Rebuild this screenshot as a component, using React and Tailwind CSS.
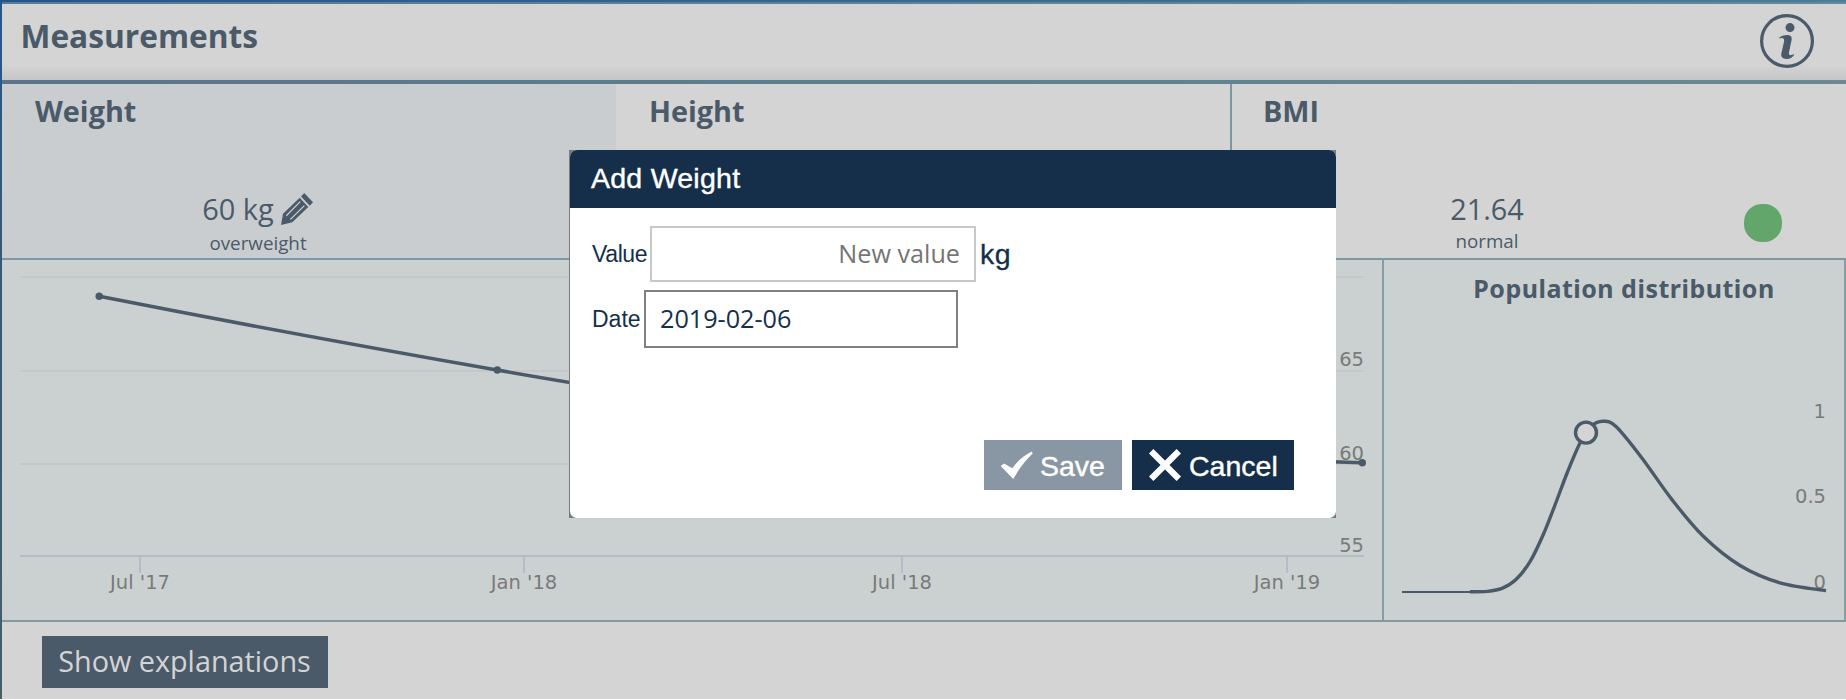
const OS = "font-['Open_Sans',sans-serif]";
const GRID_Y = [277, 371, 464];
const MONTHS = [
  { x: 140, label: "Jul '17" },
  { x: 524, label: "Jan '18" },
  { x: 902, label: "Jul '18" },
  { x: 1287, label: "Jan '19" },
];
const WEIGHTS = [
  { y: 366, label: "65" },
  { y: 460, label: "60" },
  { y: 552, label: "55" },
];
const DENSITY = [
  { y: 418, label: "1" },
  { y: 503, label: "0.5" },
  { y: 588.5, label: "0" },
];
const CURVE = [
  [1470, 591.8], [1487, 591.4], [1502, 588.4], [1516, 579.6], [1530, 561.7], [1543.3, 534.5],
  [1555, 505], [1567.5, 472], [1580, 443], [1590.5, 427], [1602.7, 421.3], [1616, 426.5],
  [1641.7, 457.7], [1672, 499.6], [1703.3, 536.3], [1740, 565.5], [1780, 582.8], [1826, 590.7],
];

/* Catmull-Rom spline through the points, written as cubic segments */
function spline(p) {
  let d = `M${p[0][0]} ${p[0][1]}`;
  for (let i = 0; i < p.length - 1; i++) {
    const a = p[i - 1] || p[i];
    const b = p[i];
    const c = p[i + 1];
    const e = p[i + 2] || c;
    d += `C${b[0] + (c[0] - a[0]) / 6} ${b[1] + (c[1] - a[1]) / 6} ${c[0] - (e[0] - b[0]) / 6} ${c[1] - (e[1] - b[1]) / 6} ${c[0]} ${c[1]}`;
  }
  return d;
}

function PencilIcon() {
  return (
    <svg className="h-8 w-8 shrink-0" viewBox="0 0 32 32" fill="#4a5a69">
      <path d="M23.2 0 32 9.3 28.8 12.7 20 3.4Z" />
      <path d="M18.7 4.8 27.3 14 11.3 29.3 0 32 2 20.8Z" />
      <path d="M5.3 22.8 19.2 8.6M9.4 26.4 23.4 12.6" stroke="#cacdd0" strokeWidth="1.3" fill="none" />
    </svg>
  );
}

function InfoIcon() {
  return (
    <svg className="h-[54px] w-[54px]" viewBox="0 0 54 54" fill="#4a5a69">
      <circle cx="27" cy="27" r="25.4" fill="none" stroke="#4a5a69" strokeWidth="3.2" />
      <circle cx="30" cy="13.6" r="4.5" />
      <path d="M18.6 24.3C21 21.6 25 20.8 28.2 21c2.8.3 4 2 3.400 5l-2.600 12.300c-.4 2 .2 3 2 2.800 1.200-.1 2.200-.6 3.200-1.200-.6 3-3.800 4.900-7.600 5-4 .1-5.900-1.900-5.200-5.600l2.600-11.600c.4-1.900.1-3.300-1.800-3.600-1.300-.2-2.400.3-3.600.2Z" />
    </svg>
  );
}

function WeightChart() {
  return (
    <svg className="block h-[360px] w-[1380px] bg-[#cbd1d0]" viewBox="2 260 1380 360">
      {GRID_Y.map((y) => (
        <path key={y} d={`M20 ${y}H1364`} stroke="#c5c7c8" strokeWidth="2" />
      ))}
      <path d="M20 556H1364" stroke="#b5bbc9" strokeWidth="2" />
      {MONTHS.map((m) => (
        <g key={m.label}>
          <path d={`M${m.x} 557V573`} stroke="#b5bbc9" strokeWidth="2" />
          <text x={m.x} y="589" textAnchor="middle" className="font-['DejaVu_Sans',sans-serif] text-[19.5px]" fill="#7a7a7a">
            {m.label}
          </text>
        </g>
      ))}
      {WEIGHTS.map((w) => (
        <text key={w.label} x="1364" y={w.y} textAnchor="end" className="font-['DejaVu_Sans',sans-serif] text-[19.5px]" fill="#7a7a7a">
          {w.label}
        </text>
      ))}
      <path d="M99.2 296.3C230 322 360 346 497 370 760 416 1040 455 1362 462.7" fill="none" stroke="#4a5a69" strokeWidth="3.5" />
      <circle cx="99.2" cy="296.2" r="3.7" fill="#4a5a69" />
      <circle cx="497.3" cy="370" r="3.7" fill="#4a5a69" />
      <circle cx="1362.3" cy="462.8" r="3.7" fill="#4a5a69" />
    </svg>
  );
}

function PopulationChart() {
  return (
    <svg className="block h-[360px] w-[460px] bg-[#cbd1d0]" viewBox="1384 260 460 360">
      <text x="1624" y="298" textAnchor="middle" className="font-['Noto_Sans',sans-serif] text-[25px] font-bold tracking-[0.5px]" fill="#4a5a69">
        Population distribution
      </text>
      {DENSITY.map((d) => (
        <text key={d.label} x="1826" y={d.y} textAnchor="end" className="font-['DejaVu_Sans',sans-serif] text-[19.5px]" fill="#7a7a7a">
          {d.label}
        </text>
      ))}
      <path d="M1402 592H1480" stroke="#4a5a69" strokeWidth="2" />
      <path d={spline(CURVE)} fill="none" stroke="#4a5a69" strokeWidth="3.4" />
      <circle cx="1586" cy="432.6" r="10.5" fill="#d4d4d4" stroke="#4a5a69" strokeWidth="3.4" />
    </svg>
  );
}

function AddWeightDialog() {
  return (
    <div className="absolute left-[569px] top-[150px] w-[767px] bg-[#777b7c] pl-px">
      <div className="flex h-[368px] flex-col overflow-hidden rounded-[7px] bg-white font-['Liberation_Sans',Arial,sans-serif] text-[#152f4b]">
        <h2 className="h-[58px] bg-[#152f4b] pl-[21px] text-[28.5px] leading-[56px] tracking-[0.25px] text-white [-webkit-text-stroke:0.4px]">
          Add Weight
        </h2>
        <div className="mt-[18px] flex h-[56px] items-center pl-[22px]">
          <label className="w-[58px] text-[23px] leading-[56px] tracking-[-0.4px]">Value</label>
          <input
            placeholder="New value"
            className={`h-[56px] w-[326px] border-2 border-[#c8c8c8] bg-white pb-[3px] pr-[14px] text-right text-[25.2px] outline-none placeholder:text-[#757575] placeholder:opacity-100 ${OS}`}
          />
          <span className="pl-[4px] text-[28.5px] leading-[56px] tracking-[0.4px] [-webkit-text-stroke:0.3px]">kg</span>
        </div>
        <div className="mt-2 flex h-[58px] items-center pl-[22px]">
          <label className="w-[52px] text-[23px] leading-[56px]">Date</label>
          <input
            defaultValue="2019-02-06"
            className={`h-[58px] w-[314px] border-2 border-[#808080] bg-white pb-[2px] pl-[14px] text-[25.2px] outline-none ${OS}`}
          />
        </div>
        <div className="mt-[92px] flex gap-[10px] pl-[414px] text-[28.5px] leading-[52px] text-white [-webkit-text-stroke:0.4px]">
          <button className="flex h-[50px] w-[138px] items-center bg-[#8997a5] pl-4">
            <svg className="mr-2 h-8 w-8 overflow-visible" viewBox="0 0 32 32" fill="#fff">
              <path d="M.7 16.9 4 14.5 12.300 19.200C17.500 12 24 6.300 31.700 2.400L32.700 4.500C25.500 11 18.500 20.500 13.300 30Z" />
            </svg>
            <span className="pt-[2px]">Save</span>
          </button>
          <button className="flex h-[50px] w-[162px] items-center bg-[#152f4b] pl-[17px]">
            <svg className="mr-2 h-8 w-8" viewBox="0 0 32 32" stroke="#fff" strokeWidth="6.2">
              <path d="M2.2 2.2 29.8 29.8M29.8 2.2 2.2 29.8" />
            </svg>
            <span className="pt-[2px]">Cancel</span>
          </button>
        </div>
      </div>
    </div>
  );
}

export default function App() {
  return (
    <div className={`relative flex h-[699px] w-[1846px] flex-col overflow-hidden bg-[#d4d4d4] text-[#4a5a69] ${OS}`}>
      <div className="h-[2px] shrink-0 bg-linear-to-r from-[#22568a] to-[#457f9a]" />
      <div className="flex grow">
        <div className="w-[2px] shrink-0 bg-linear-to-b from-[#26578a] via-[#3a5a70] to-[#46606a]" />
        <div className="flex w-[1844px] flex-col">
          <div className="h-[2px] bg-linear-to-r from-[#5c7893] to-[#6b8794]" />
          <header className="flex h-[76px] items-start justify-between bg-linear-to-b from-[#d4d4d4] from-80% to-[#c6c6c6] pl-[18.5px] pr-8">
            <h1 className="mt-3 text-[31.7px] font-bold leading-10">Measurements</h1>
            <div className="mt-[10px]">
              <InfoIcon />
            </div>
          </header>
          <div className="h-1 bg-linear-to-r from-[#5c7389] via-[#5c8090] to-[#6d8890]" />
          <section className="flex h-[174px]">
            <div className="flex w-[614px] flex-col bg-[#cacdd0]">
              <h2 className="mt-[7px] pl-[33px] text-[28.8px] font-bold leading-10">Weight</h2>
              <div className="mt-[58px] flex w-[512px] flex-col items-center">
                <div className="flex items-center gap-[7px] text-[29px] leading-10">
                  <span className="-ml-px">60 kg</span> <PencilIcon />
                </div>
                <div className="mt-[2px] text-[18.8px] leading-6">overweight</div>
              </div>
            </div>
            <div className="w-[614px] pl-[33px]">
              <h2 className="mt-[7px] text-[28.8px] font-bold leading-10">Height</h2>
            </div>
            <div className="flex grow flex-col border-l-2 border-[#7b97a1]">
              <h2 className="mt-[7px] pl-[31px] text-[28.8px] font-bold leading-10">BMI</h2>
              <div className="mt-[58px] flex">
                <div className="flex w-[510px] flex-col items-center">
                  <div className="text-[28.8px] leading-10">21.64</div>
                  <div className="text-[18.8px] leading-6">normal</div>
                </div>
                <div className="ml-[2px] mt-[15px] h-[38px] w-[38px] rounded-[18px] bg-[#62a66b]" />
              </div>
            </div>
          </section>
          <section className="flex border-b-2 border-t-2 border-b-[#84999e] border-t-[#7b98a3]">
            <WeightChart />
            <div className="border-x-2 border-[#80a0a5]">
              <PopulationChart />
            </div>
          </section>
          <footer className="pl-10 pt-[14px]">
            <button className="h-[52px] w-[286px] bg-[#4a5a69] pb-[2px] pr-px text-center text-[28.8px] leading-[50px] text-[#d4d4d4]">
              Show explanations
            </button>
          </footer>
        </div>
      </div>
      <AddWeightDialog />
    </div>
  );
}
